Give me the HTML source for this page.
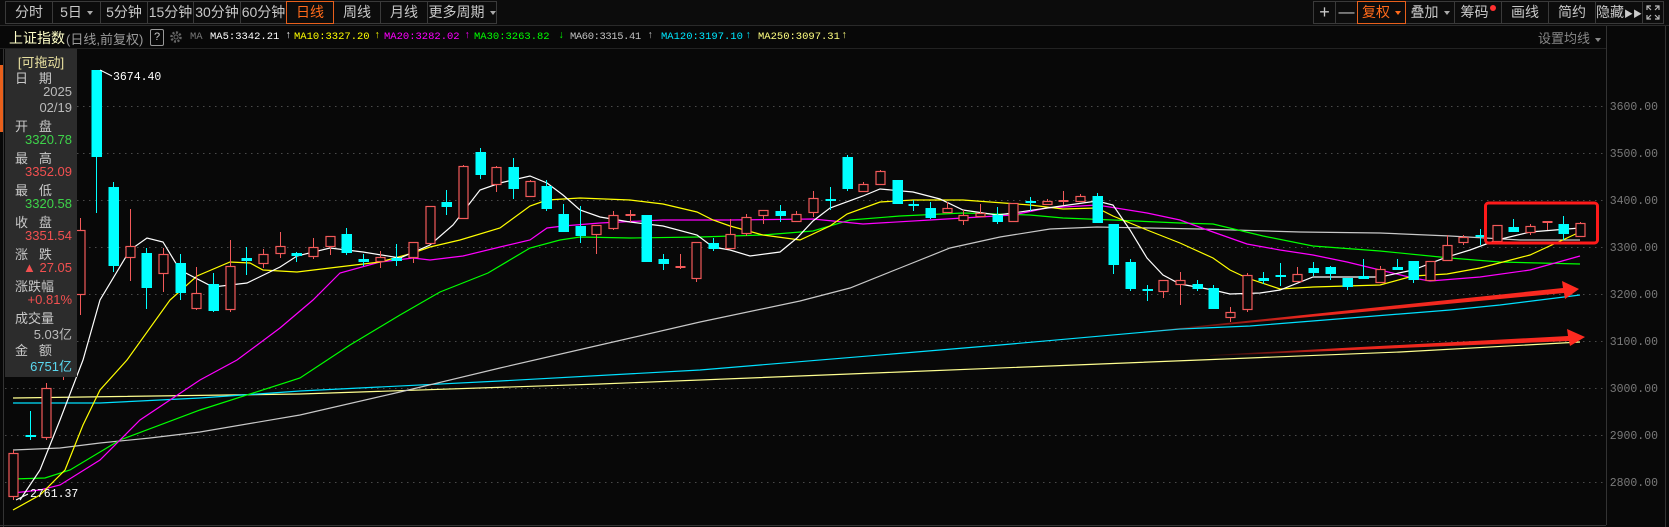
<!DOCTYPE html>
<html><head><meta charset="utf-8">
<style>
html,body{margin:0;padding:0;background:#080808;width:1669px;height:527px;overflow:hidden;font-family:"Liberation Sans","Noto Sans CJK SC",sans-serif;}
.a{position:absolute;white-space:nowrap;}
.btn{position:absolute;top:1px;height:23px;border:1px solid #3a3a3a;box-sizing:border-box;color:#c8c8c8;font-size:14px;line-height:21px;text-align:center;background:#0c0c0c;}
.on{border-color:#e8601c;color:#ff6a1a;z-index:2}
.tri{display:inline-block;width:0;height:0;border-left:3.5px solid transparent;border-right:3.5px solid transparent;border-top:4px solid #aaa;vertical-align:middle;margin-left:5px}
.mono{font-family:"Liberation Mono","DejaVu Sans Mono",monospace;font-size:10.5px;}
.pl{position:absolute;left:10px;color:#c8c8c8;font-size:13px;}
.pv{position:absolute;right:5px;font-size:13px;}
</style></head><body>
<svg id="s" width="1669" height="527" style="position:absolute;left:0;top:0">
<defs>
<linearGradient id="g1" x1="0" x2="1" y1="0" y2="0"><stop offset="0" stop-color="#ff2a20" stop-opacity="0.1"/><stop offset="0.35" stop-color="#ff2a20" stop-opacity="0.9"/><stop offset="1" stop-color="#ff2a20"/></linearGradient>
</defs>
<rect x="0" y="0" width="1669" height="527" fill="#080808"/>
<rect x="0" y="0" width="1669" height="25" fill="#0c0c0c"/>
<line x1="0" y1="25.5" x2="1669" y2="25.5" stroke="#2a2a2a"/>
<line x1="0" y1="48.5" x2="1606" y2="48.5" stroke="#222"/>
<line x1="1606.5" y1="26" x2="1606.5" y2="525" stroke="#333"/>
<line x1="1665.5" y1="26" x2="1665.5" y2="527" stroke="#333"/>
<line x1="3.5" y1="49" x2="3.5" y2="527" stroke="#333"/>
<line x1="0" y1="525.5" x2="1606" y2="525.5" stroke="#333"/>
<rect x="0" y="65" width="3" height="67" fill="#e8601c"/>
<g id="grid"></g>
<g id="ma"></g>
<g id="cd"></g>
<g id="ar"></g>
</svg>

<div class="btn" style="left:5px;width:48px">分时</div>
<div class="btn" style="left:52px;width:49px">5日<span class="tri"></span></div>
<div class="btn" style="left:100px;width:48px">5分钟</div>
<div class="btn" style="left:147px;width:47px">15分钟</div>
<div class="btn" style="left:193px;width:48px">30分钟</div>
<div class="btn" style="left:240px;width:47px">60分钟</div>
<div class="btn on" style="left:286px;width:48px">日线</div>
<div class="btn" style="left:333px;width:48px">周线</div>
<div class="btn" style="left:380px;width:48px">月线</div>
<div class="btn" style="left:427px;width:70px">更多周期<span class="tri"></span></div>

<div class="btn" style="left:1313px;width:23px;font-size:18px">+</div>
<div class="btn" style="left:1335px;width:23px;font-size:16px">—</div>
<div class="btn on" style="left:1357px;width:49px">复权<span class="tri" style="border-top-color:#ff6a1a"></span></div>
<div class="btn" style="left:1405px;width:50px">叠加<span class="tri"></span></div>
<div class="btn" style="left:1454px;width:48px">筹码<span style="display:inline-block;width:6px;height:6px;border-radius:3px;background:#ff3030;vertical-align:top;margin-top:3px;margin-left:1px"></span></div>
<div class="btn" style="left:1501px;width:48px">画线</div>
<div class="btn" style="left:1548px;width:48px">简约</div>
<div class="btn" style="left:1595px;width:48px">隐藏<span style="font-size:9px;color:#ccc">▶▶</span></div>
<div class="btn" style="left:1642px;width:22px">
<svg width="20" height="21" style="position:absolute;left:0;top:0"><g stroke="#bbb" stroke-width="1.2" fill="none"><path d="M4 8V4H8M4 4L8 8M16 8V4H12M16 4L12 8M4 13V17H8M4 17L8 13M16 13V17H12M16 17L12 13"/></g></svg></div>

<div class="a" style="left:9px;top:28px;font-size:14px;color:#ffffc8">上证指数</div>
<div class="a" style="left:66px;top:29px;font-size:13px;color:#9a9a9a">(日线,前复权)</div>
<div class="a" style="left:150px;top:29px;width:12px;height:15px;border:1px solid #999;border-radius:2px;color:#ccc;font-size:11px;line-height:15px;text-align:center">?</div>
<svg class="a" style="left:169px;top:30px" width="14" height="14"><circle cx="7" cy="7" r="4.5" fill="none" stroke="#666" stroke-width="2.5" stroke-dasharray="2 1.5"/><circle cx="7" cy="7" r="2" fill="none" stroke="#666"/></svg>
<div class="a mono" style="left:190px;top:31px;color:#777">MA</div>
<div class="a mono" style="left:210px;top:31px;color:#fff">MA5:3342.21</div>
<div class="a mono" style="left:285px;top:30px;color:#fff">↑</div>
<div class="a mono" style="left:294px;top:31px;color:#ffff00">MA10:3327.20</div>
<div class="a mono" style="left:374px;top:30px;color:#ffff00">↑</div>
<div class="a mono" style="left:384px;top:31px;color:#ff00ff">MA20:3282.02</div>
<div class="a mono" style="left:464px;top:30px;color:#ff00ff">↑</div>
<div class="a mono" style="left:474px;top:31px;color:#00ff00">MA30:3263.82</div>
<div class="a mono" style="left:558px;top:30px;color:#00ff00">↓</div>
<div class="a mono" style="left:570px;top:31px;color:#c0c0c0;letter-spacing:-0.4px">MA60:3315.41</div>
<div class="a mono" style="left:647px;top:30px;color:#c0c0c0">↑</div>
<div class="a mono" style="left:661px;top:31px;color:#00e8ff">MA120:3197.10</div>
<div class="a mono" style="left:745px;top:30px;color:#00e8ff">↑</div>
<div class="a mono" style="left:758px;top:31px;color:#ffff80">MA250:3097.31</div>
<div class="a mono" style="left:841px;top:30px;color:#ffff80">↑</div>
<div class="a" style="left:1538px;top:28px;font-size:13px;color:#888">设置均线<span class="tri" style="border-top-color:#888"></span></div>

<div class="a" style="left:5px;top:49px;width:72px;height:328px;background:#2c2c2c;">
<div class="a" style="left:0;width:72px;text-align:center;top:3px;font-size:13px;color:#e8e0a0">[可拖动]</div>
<div class="pl" style="top:19px">日&nbsp;&nbsp;&nbsp;期</div>
<div class="pv" style="top:35px;color:#bbb">2025</div>
<div class="pv" style="top:51px;color:#bbb">02/19</div>
<div class="pl" style="top:67px">开&nbsp;&nbsp;&nbsp;盘</div>
<div class="pv" style="top:83px;color:#3ed34a">3320.78</div>
<div class="pl" style="top:99px">最&nbsp;&nbsp;&nbsp;高</div>
<div class="pv" style="top:115px;color:#f25050">3352.09</div>
<div class="pl" style="top:131px">最&nbsp;&nbsp;&nbsp;低</div>
<div class="pv" style="top:147px;color:#3ed34a">3320.58</div>
<div class="pl" style="top:163px">收&nbsp;&nbsp;&nbsp;盘</div>
<div class="pv" style="top:179px;color:#f25050">3351.54</div>
<div class="pl" style="top:195px">涨&nbsp;&nbsp;&nbsp;跌</div>
<div class="pv" style="top:211px;color:#f25050">▲ 27.05</div>
<div class="pl" style="top:227px">涨跌幅</div>
<div class="pv" style="top:243px;color:#f25050">+0.81%</div>
<div class="pl" style="top:259px">成交量</div>
<div class="pv" style="top:275px;color:#bbb">5.03亿</div>
<div class="pl" style="top:291px">金&nbsp;&nbsp;&nbsp;额</div>
<div class="pv" style="top:307px;color:#5ad8f0">6751亿</div>
</div>

<script>
var NS="http://www.w3.org/2000/svg";
function el(p,t,a){var e=document.createElementNS(NS,t);for(var k in a)e.setAttribute(k,a[k]);document.getElementById(p).appendChild(e);return e;}
var labels=[[3600,106],[3500,153],[3400,200],[3300,247],[3200,294],[3100,341],[3000,388],[2900,435],[2800,482]];
labels.forEach(function(l){
 el('grid','line',{x1:5,y1:l[1]+.5,x2:1604,y2:l[1]+.5,stroke:'#4a4a4a','stroke-dasharray':'1.5 4.5'});
 var t=el('grid','text',{x:1658,y:l[1]+4,fill:'#7a7a7a','font-size':'11.5','text-anchor':'end','font-family':'Liberation Mono, monospace'});t.textContent=l[0].toFixed(2);
});
function pl(c,w,pts){el('ma','polyline',{points:pts,fill:'none',stroke:c,'stroke-width':w||1.2});}
pl('#ffff90',1.2,'13,398 300,394 600,384 900,372 1200,360 1400,352 1580,342');
pl('#00e0ff',1.2,'13,403 100,403 140,401 200,398 300,391 500,381 700,370 1000,345 1180,329 1250,326 1300,322 1350,318 1400,314 1450,310 1500,305 1580,295');
pl('#c8c8c8',1.2,'13,450 60,448 100,443 150,438 200,432 300,415 400,392 500,368 600,345 700,322 800,301 850,288 900,268 950,248 1000,237 1050,229 1097,227 1200,229 1300,232 1380,233 1450,236 1520,240 1580,240');
pl('#00ff00',1.2,'13,479 45,478 70,470 120,440 200,410 300,378 350,345 400,315 440,292 488,273 530,248 560,240 580,237 630,238 700,237 763,235 813,231 850,220 900,216 963,213 1030,215 1063,218 1113,220 1180,223 1213,224 1263,236 1313,246 1380,251 1450,258 1500,262 1580,264');
pl('#ff00ff',1.2,'13,493 40,490 60,485 100,460 140,420 200,380 237,360 280,328 313,300 340,273 380,262 413,258 430,260 463,256 500,247 530,240 547,228 563,226 600,223 663,220 730,220 813,219 863,224 930,220 1013,215 1047,208 1097,205 1147,213 1180,220 1213,232 1247,244 1280,250 1313,255 1347,262 1380,270 1413,278 1430,281 1480,277 1530,270 1580,256');
pl('#ffff00',1.2,'13,510 40,495 65,470 83,425 100,390 127,360 170,300 197,276 230,262 250,263 263,270 297,272 330,268 380,262 413,253 430,247 460,240 500,228 530,206 547,200 580,198 630,200 663,204 697,212 713,220 730,226 763,235 800,240 830,226 847,214 880,202 913,200 963,200 1030,205 1063,209 1097,208 1113,216 1147,230 1180,243 1213,258 1230,270 1247,278 1280,289 1313,287 1380,285 1413,276 1447,274 1480,268 1530,255 1580,232');
pl('#ffffff',1.2,'20,500 40,470 60,420 83,360 100,300 130,250 147,238 163,242 180,270 213,287 247,283 280,267 297,256 330,248 363,252 400,258 430,245 453,225 480,190 500,183 530,176 547,183 563,195 580,210 600,217 630,222 663,226 697,235 713,247 730,250 750,256 780,252 797,238 813,221 830,208 863,196 880,189 913,192 940,199 963,210 997,215 1013,213 1047,208 1097,201 1113,205 1130,230 1147,258 1163,275 1180,284 1213,290 1230,294 1260,293 1280,290 1313,277 1380,277 1413,270 1447,257 1470,250 1497,240 1530,232 1580,228');
var C=[[453,497,450,500,1],[435,437,411,440,0],[388,438,383,440,1],[330,360,320,380,1],[230,295,218,315,1],[70,157,70,213,0],[187,266,182,272,0],[246,258,209,281,1],[253,288,248,309,0],[254,274,248,292,1],[263,293,254,300,0],[293,309,267,310,1],[284,311,273,312,0],[266,310,240,312,1],[258,261,247,275,0],[254,264,249,268,1],[246,254,232,258,1],[253,256,252,262,0],[247,257,238,259,1],[236,247,236,255,1],[234,253,228,255,0],[259,262,254,266,0],[257,262,251,268,1],[258,261,244,266,0],[242,258,242,263,1],[206,244,206,244,1],[202,207,190,215,0],[166,219,165,219,1],[152,175,148,179,0],[167,185,166,192,1],[167,189,158,199,0],[181,197,180,197,1],[186,209,180,211,0],[214,232,204,232,0],[226,236,206,243,0],[225,235,225,254,1],[215,229,211,230,1],[214,217,210,222,1],[215,262,215,262,0],[259,264,254,270,0],[266,268,254,269,1],[242,279,242,282,1],[243,249,238,251,0],[234,249,219,249,1],[217,234,214,236,1],[210,216,210,224,1],[211,216,205,222,0],[214,222,211,222,1],[198,213,191,217,1],[199,201,187,210,0],[157,189,155,191,0],[184,192,182,192,1],[171,185,170,185,1],[180,204,180,204,0],[204,206,200,211,0],[208,218,202,219,0],[208,213,202,213,1],[215,221,210,225,1],[213,217,204,217,1],[215,222,207,224,0],[203,222,203,222,1],[201,203,197,211,0],[201,205,199,205,1],[200,202,191,205,1],[196,202,194,202,1],[196,223,193,223,0],[224,265,224,274,0],[262,289,259,291,0],[289,291,285,301,0],[280,292,280,298,1],[280,285,272,305,1],[284,289,280,291,0],[288,309,285,309,0],[312,318,307,322,1],[275,310,273,312,1],[278,281,272,284,0],[275,277,263,286,0],[274,282,267,282,1],[268,273,262,276,0],[267,274,266,280,0],[278,287,278,290,0],[276,279,259,279,0],[269,283,266,283,1],[267,270,259,270,0],[261,280,261,283,0],[261,281,261,281,1],[245,261,235,261,1],[237,243,235,245,1],[235,237,229,245,0],[225,242,225,242,1],[227,232,219,232,0],[226,233,224,235,1],[221,223,221,230,1],[224,234,216,240,0],[223,237,222,237,1]];
C.forEach(function(c,i){
 var x=Math.round(13+16.67*i)+.5, up=c[4], col=up?'#f25a5a':'#00ffff';
 el('cd','line',{x1:x,y1:c[2],x2:x,y2:c[3],stroke:col,'stroke-width':1});
 var h=Math.max(c[1]-c[0],2);
 if(up){ if(h<=3) el('cd','rect',{x:x-5,y:c[0],width:10,height:2,fill:col});
   else el('cd','rect',{x:x-4.5,y:c[0]+.5,width:9,height:h-1,fill:'#080808',stroke:col,'stroke-width':1.2});}
 else el('cd','rect',{x:x-5,y:c[0],width:10.5,height:h,fill:col});
});
el('ar','line',{x1:100,y1:70,x2:112,y2:76,stroke:'#fff'});
var t=el('ar','text',{x:113,y:80,fill:'#fff','font-size':'11.5','font-family':'Liberation Mono, monospace'});t.textContent='3674.40';
el('ar','line',{x1:16,y1:500,x2:28,y2:494,stroke:'#fff'});
t=el('ar','text',{x:30,y:497,fill:'#fff','font-size':'11.5','font-family':'Liberation Mono, monospace'});t.textContent='2761.37';
el('ar','rect',{x:1485.5,y:203,width:112,height:40,rx:3,fill:'none',stroke:'#ff1a1a','stroke-width':3});
el('ar','polygon',{points:'1150,331 1563,288 1562,281 1579,289 1565,299 1564,293 1150,332',fill:'url(#g1)'});
el('ar','polygon',{points:'1210,355 1568,336 1567,329 1585,337 1570,346 1569,341 1210,356',fill:'url(#g1)'});
</script>
</body></html>
